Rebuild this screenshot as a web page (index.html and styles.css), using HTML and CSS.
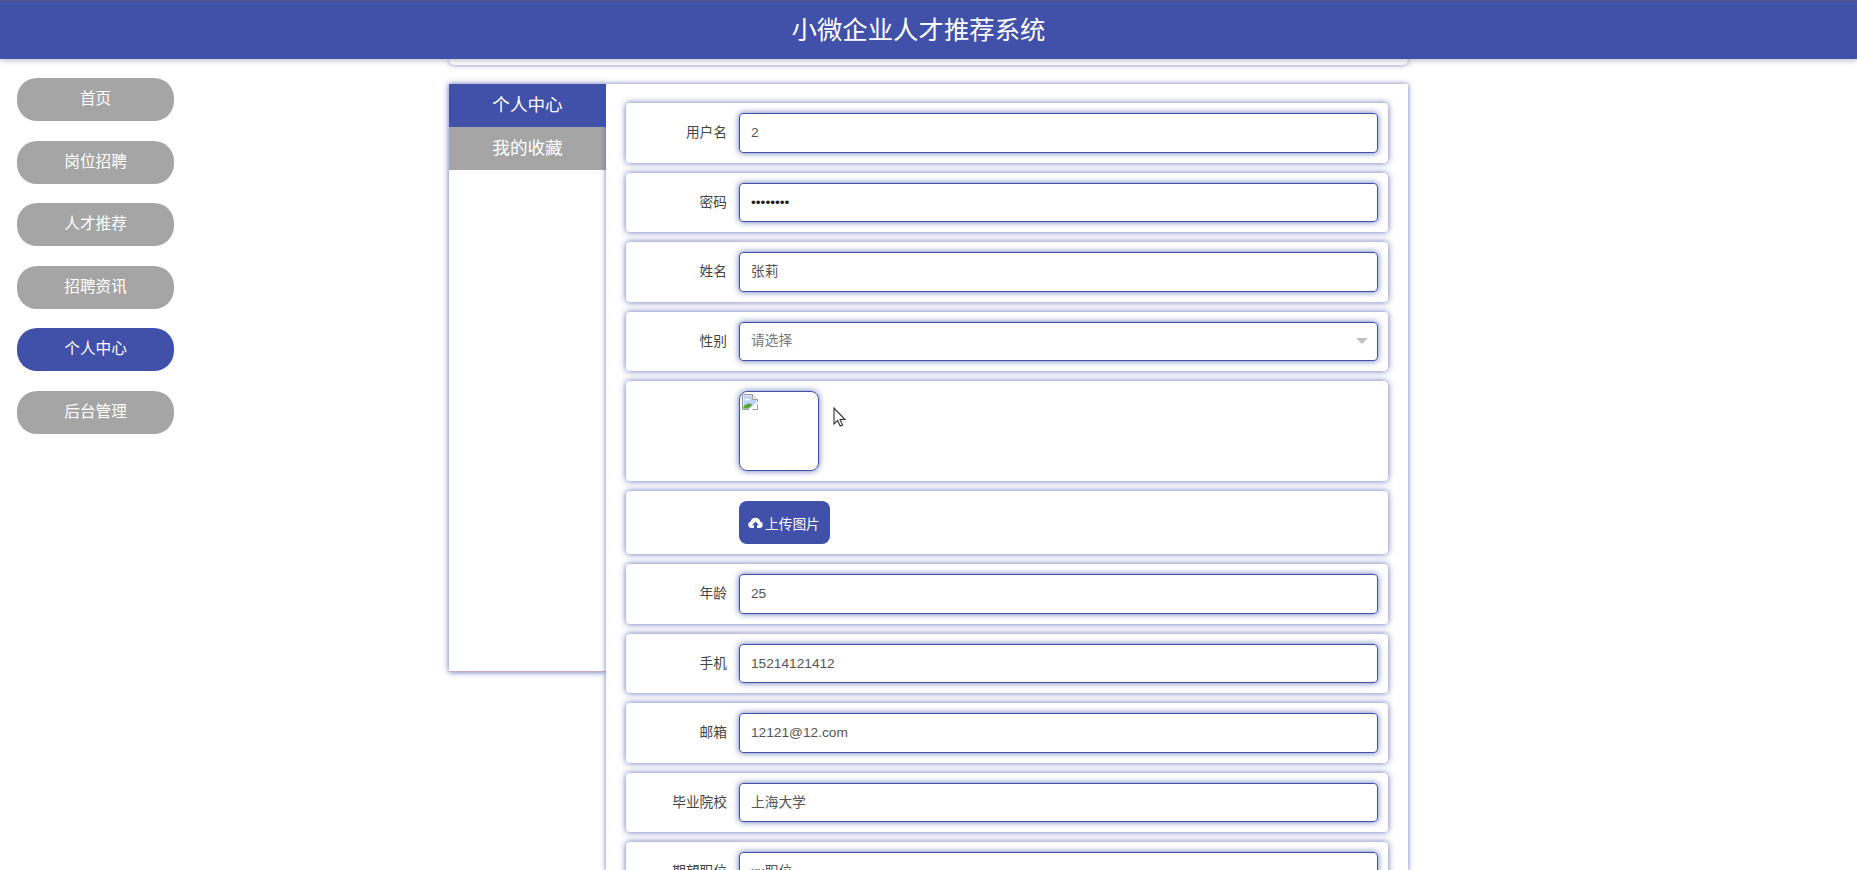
FILE: index.html
```html
<!DOCTYPE html>
<html lang="zh-CN">
<head>
<meta charset="utf-8">
<title>小微企业人才推荐系统</title>
<link rel="stylesheet" href="styles.css">
</head>
<body>
<header class="header">小微企业人才推荐系统</header>
<div class="page">
  <nav class="nav">
    <a class="nav-item">首页</a>
    <a class="nav-item">岗位招聘</a>
    <a class="nav-item">人才推荐</a>
    <a class="nav-item">招聘资讯</a>
    <a class="nav-item active">个人中心</a>
    <a class="nav-item">后台管理</a>
  </nav>
  <main class="content">
    <div class="banner"></div>
    <div class="center">
      <aside class="tabs">
        <a class="tab active">个人中心</a>
        <a class="tab">我的收藏</a>
      </aside>
      <form class="form">
        <div class="row"><label class="label">用户名</label><div class="field">2</div></div>
        <div class="row"><label class="label">密码</label><div class="field dots">••••••••</div></div>
        <div class="row"><label class="label">姓名</label><div class="field">张莉</div></div>
        <div class="row"><label class="label">性别</label><div class="field select"><span>请选择</span><i class="arrow"></i></div></div>
        <div class="row"><span class="label"></span><div class="photo">
          <svg class="broken" width="16" height="16" viewBox="0 0 16 16"><path d="M.5 15.500V.5h10l5 5V8" fill="#fff" stroke="#999"/><path d="M1.500 1.500H10V6h4.500v2.500L8 14.500H1.500z" fill="#c0d4f5"/><path d="M3 6.300c0-2 2.200-2.300 2.700-1.200 1.500-.5 2.300.4 2 1.200z" fill="#fff"/><path d="M1.500 14.500v-1.300C3.500 9.500 7 8.500 10.500 10.500l-4 4z" fill="#56a638"/><path d="M.5 15.500H7M10.500 15.500h5v-5" fill="none" stroke="#999"/><path d="M10.500.5v5h5" fill="#fff" stroke="#999"/></svg>
          <svg class="cursor" width="14" height="21" viewBox="0 0 14 21"><path d="M1 1v16l3.600-3.500 2.600 5.600 2.400-1.100-2.600-5.500H12z" fill="#fff" stroke="#333" stroke-width="1.100"/></svg>
        </div></div>
        <div class="row"><span class="label"></span><div class="upload">
          <svg width="15" height="12" viewBox="0 0 15 12"><path d="M3.500 11A3.300 3.300 0 0 1 2.700 4.500 4.900 4.900 0 0 1 12.200 4.400 3.350 3.350 0 0 1 11.500 11H9V8.200h2L7.500 4.600 4 8.200h2V11z" fill="#fff"/></svg>
          <span>上传图片</span></div></div>
        <div class="row"><label class="label">年龄</label><div class="field">25</div></div>
        <div class="row"><label class="label">手机</label><div class="field">15214121412</div></div>
        <div class="row"><label class="label">邮箱</label><div class="field">12121@12.com</div></div>
        <div class="row"><label class="label">毕业院校</label><div class="field">上海大学</div></div>
        <div class="row"><label class="label">期望职位</label><div class="field">xx职位</div></div>
      </form>
    </div>
  </main>
</div>
</body>
</html>
```
FILE: styles.css
```css
* { box-sizing: border-box; }
body {
  margin: 0;
  height: 870px;
  overflow: hidden;
  display: flex;
  flex-direction: column;
  background: #fff;
  font-family: "Liberation Sans", "Noto Sans CJK SC", sans-serif;
}
.header {
  flex: none;
  position: relative;
  z-index: 2;
  height: 59px;
  padding-right: 20px;
  border-top: 1px solid #56587c;
  background: #4150a9;
  box-shadow: 0 1px 6px rgba(0, 0, 0, .3);
  color: #fff;
  font-size: 25.4px;
  line-height: 59px;
  text-align: center;
}
.page { flex: 1; min-height: 0; overflow: hidden; display: flex; }
.nav {
  width: 449px;
  flex: none;
  display: flex;
  flex-direction: column;
  gap: 19.6px;
  padding: 19px 0 0 17.3px;
}
.nav-item {
  width: 156.5px;
  height: 43px;
  border-radius: 20px;
  background: #a5a5a5;
  color: #fff;
  font-size: 15.65px;
  line-height: 42px;
  text-align: center;
}
.nav-item.active, .tab.active { background: #4150a9; }
.content { width: 959px; }
.banner {
  height: 5.5px;
  border-radius: 0 0 5px 5px;
  box-shadow: 0 0 5px rgba(65, 80, 169, .7);
}
.center {
  display: flex;
  align-items: flex-start;
  margin-top: 19.5px;
}
.tabs {
  width: 157px;
  height: 588px;
  flex: none;
  border-bottom: 1px solid #d0a8be;
  box-shadow: 0 0 6px rgba(65, 80, 169, .85);
}
.tab {
  display: block;
  height: 43px;
  background: #a5a5a5;
  color: #fff;
  font-size: 17.6px;
  line-height: 43px;
  text-align: center;
}
.form {
  flex: 1;
  position: relative;
  display: flex;
  flex-direction: column;
  gap: 10px;
  height: 787px;
  padding: 19.1px 20px 0 19.5px;
  background: #fff;
  box-shadow: 0 0 5px rgba(65, 80, 169, .8);
}
.row {
  display: flex;
  flex: none;
  padding: 10px;
  border-radius: 4px;
  background: #fff;
  box-shadow: 0 0 6px rgba(65, 80, 169, .85);
}
.label {
  width: 103.5px;
  flex: none;
  padding-right: 12px;
  color: #444;
  font-size: 13.7px;
  line-height: 39px;
  text-align: right;
}
.field {
  flex: 1;
  height: 39.5px;
  padding-left: 11px;
  border: 1px solid #4150a9;
  border-radius: 4px;
  box-shadow: 0 0 6px rgba(65, 80, 169, .8);
  color: #555;
  font-size: 13.7px;
  line-height: 38.5px;
}
.dots { color: #222; }
.select {
  display: flex;
  justify-content: space-between;
  align-items: center;
  padding-right: 9px;
  color: #777;
}
.arrow {
  border: 6px solid transparent;
  border-top-color: #c2c2c2;
  border-bottom: 0;
}
.photo {
  position: relative;
  width: 80px;
  height: 80px;
  padding: 2px;
  border: 1px solid #4150a9;
  border-radius: 8px;
  box-shadow: 0 0 6px rgba(65, 80, 169, .8);
}
.broken { display: block; }
.cursor { position: absolute; left: 93px; top: 15px; }
.upload {
  display: flex;
  align-items: center;
  gap: 2px;
  width: 91px;
  height: 43px;
  padding-left: 9px;
  border-radius: 8px;
  background: #4150a9;
  color: #fff;
  font-size: 13.7px;
  white-space: nowrap;
}
```
